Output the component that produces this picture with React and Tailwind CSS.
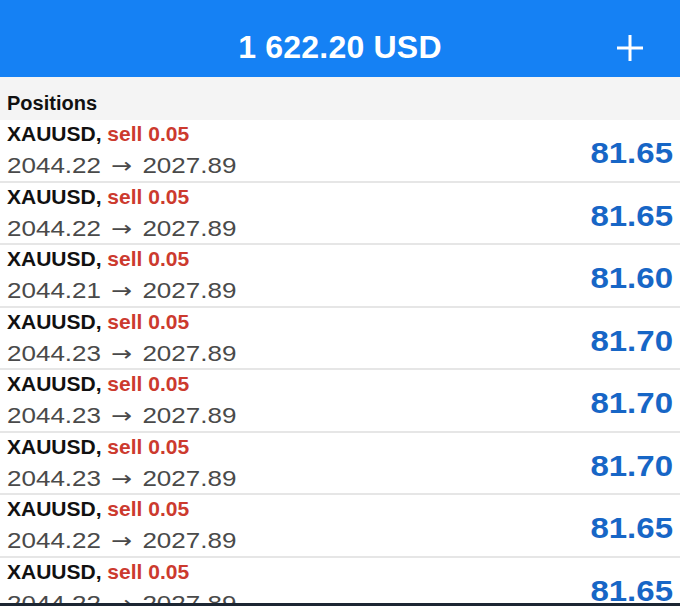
import React from "react";

const rows = [
  ["2044.22", "81.65"],
  ["2044.22", "81.65"],
  ["2044.21", "81.60"],
  ["2044.23", "81.70"],
  ["2044.23", "81.70"],
  ["2044.23", "81.70"],
  ["2044.22", "81.65"],
  ["2044.22", "81.65"],
];

export default function App() {
  return (
    <div
      className="w-[680px] h-[606px] overflow-hidden flex flex-col bg-white"
      style={{ fontFamily: '"Liberation Sans", Arial, sans-serif' }}
    >
      <div className="h-[77px] shrink-0 bg-[#1581f4] grid grid-cols-[1fr_auto_1fr] pt-[29px]">
        <div />
        <div className="text-white text-[32px] leading-[36px] font-bold tracking-[0.2px]">
          1 622.20 USD
        </div>
        <div className="flex justify-end pr-[34px] pt-[3px]">
          <svg width="32" height="32" viewBox="0 0 32 32" fill="none">
            <path d="M16 3V29M3 16H29" stroke="white" strokeWidth="3" strokeLinecap="butt" />
          </svg>
        </div>
      </div>
      <div className="h-[43px] shrink-0 bg-[#f4f4f4] pt-[14px] pl-[7px]">
        <div className="text-[20px] leading-[24px] font-bold text-[#111]">Positions</div>
      </div>
      <div className="flex-1 overflow-hidden">
        {rows.map(([open, profit], i) => (
          <div
            key={i}
            className="h-[62.5px] flex justify-between border-b-2 border-[#e6e6e6] pl-[7px] pr-[7px]"
          >
            <div className="pt-[2px]">
              <div className="text-[21px] leading-[24px] font-bold text-[#111]">
                XAUUSD, <span className="text-[#cc3a2e]">sell 0.05</span>
              </div>
              <div className="mt-[6px] text-[26px] leading-[26px] text-[#4a4a4a] whitespace-nowrap scale-y-[0.85]">
                {open}{" "}
                <span
                  style={{ fontFamily: '"DejaVu Sans", sans-serif' }}
                  className="text-[25px] mx-[3px]"
                >
                  →
                </span>{" "}
                2027.89
              </div>
            </div>
            <div className="mt-[15px] text-[33px] leading-[36px] font-bold text-[#1766c6] scale-y-90">
              {profit}
            </div>
          </div>
        ))}
      </div>
      <div className="h-[3px] shrink-0 bg-[#1c2633]" />
    </div>
  );
}
